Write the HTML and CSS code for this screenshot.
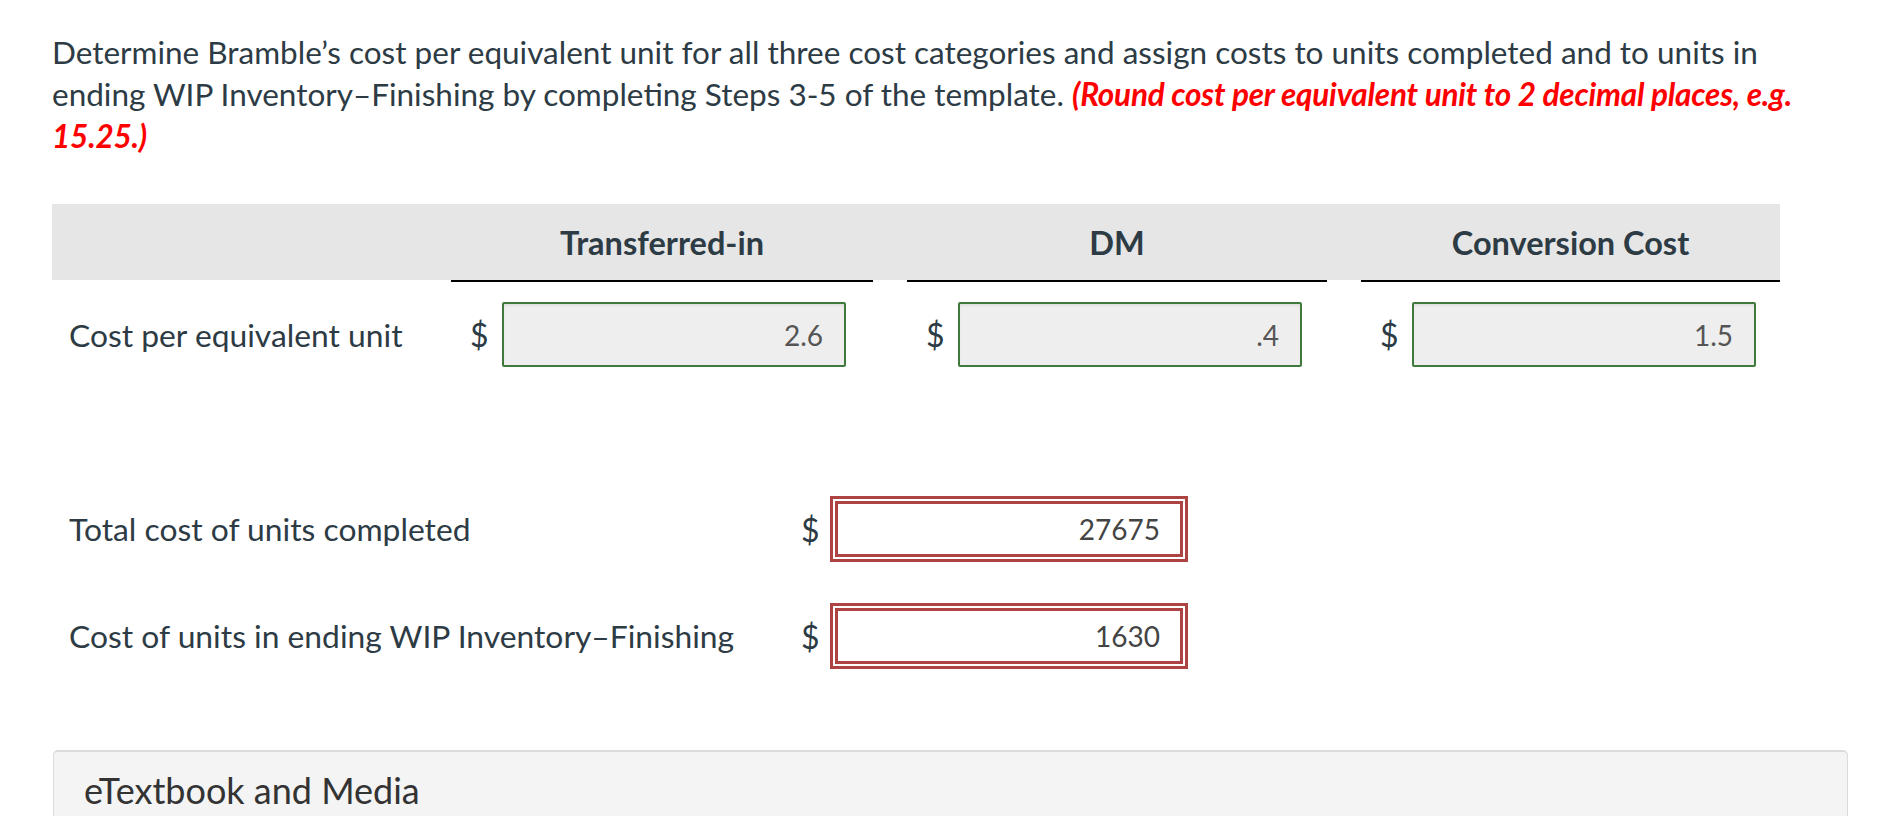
FILE: index.html
```html
<!DOCTYPE html>
<html>
<head>
<meta charset="utf-8">
<link rel="stylesheet" href="styles.css">
</head>
<body>
<div class="page">
  <p class="question">Determine Bramble’s cost per equivalent unit for all three cost categories and assign costs to units completed and to units in ending WIP Inventory–Finishing by completing Steps 3-5 of the template. <em class="note">(Round cost per equivalent unit to 2 decimal places, e.g. 15.25.)</em></p>

  <div class="cpe">
    <div class="cpe-head">
      <div class="hcell blank"></div>
      <div class="hcell col">Transferred-in</div>
      <div class="hcell col">DM</div>
      <div class="hcell col">Conversion Cost</div>
    </div>
    <div class="cpe-row">
      <div class="label">Cost per equivalent unit</div>
      <div class="vcell"><span class="dollar">$</span><div class="box ok">2.6</div></div>
      <div class="vcell"><span class="dollar">$</span><div class="box ok">.4</div></div>
      <div class="vcell"><span class="dollar">$</span><div class="box ok">1.5</div></div>
    </div>
  </div>

  <div class="assign">
    <div class="arow first">
      <div class="label wide">Total cost of units completed</div>
      <span class="dollar2">$</span>
      <div class="box bad">27675</div>
    </div>
    <div class="arow">
      <div class="label wide">Cost of units in ending WIP Inventory–Finishing</div>
      <span class="dollar2">$</span>
      <div class="box bad">1630</div>
    </div>
  </div>

  <div class="media">eTextbook and Media</div>
</div>
</body>
</html>
```

FILE: styles.css
```css
html, body {
  margin: 0;
  padding: 0;
  background: #ffffff;
}
body {
  font-family: Lato, "Open Sans", "Liberation Sans", sans-serif;
  color: #2d3b45;
}
.page {
  padding-left: 52px;
  width: 1796px;
}
.question {
  margin: 31px 0 0 0;
  width: 1760px;
  font-size: 31.5px;
  line-height: 42px;
  color: #2d3b45;
}
.note {
  color: #ff0000;
  font-weight: 700;
  font-style: italic;
  letter-spacing: -0.2px;
}
.cpe {
  margin-top: 47px;
  width: 1728px;
}
.cpe-head, .cpe-row {
  display: grid;
  grid-template-columns: 365px 422px 420px 419px;
  column-gap: 34px;
}
.cpe-head {
  background: linear-gradient(#e6e6e6, #e6e6e6) top left / 100% 76px no-repeat;
}
.hcell {
  height: 76px;
  display: flex;
  align-items: center;
  justify-content: center;
  font-size: 32.5px;
  font-weight: 700;
  color: #2d3b45;
}
.hcell.col {
  border-bottom: 2px solid #000;
}
.hcell.blank {
  border-bottom: 2px solid transparent;
}
.cpe-row {
  padding-top: 20px;
  align-items: center;
}
.label {
  font-size: 31.8px;
  padding-left: 17px;
  color: #2d3b45;
  white-space: nowrap;
}
.vcell {
  display: flex;
  align-items: center;
  padding-left: 19px;
}
.dollar {
  width: 32px;
  font-size: 32px;
}
.box {
  box-sizing: border-box;
  display: flex;
  align-items: center;
  justify-content: flex-end;
  font-size: 28px;
  color: #555555;
}
.box.ok {
  width: 344px;
  height: 65px;
  background: #eeeeee;
  border: 2px solid #3f7a3c;
  border-radius: 2px;
  padding-right: 21px;
  box-shadow: inset 0 2px 2px rgba(0,0,0,0.06);
}
.box.bad {
  width: 358px;
  height: 66px;
  background: #ffffff;
  border: 8px double #ad4342;
  padding-right: 20px;
  color: #444;
}
.assign {
  display: flex;
  flex-direction: column;
  gap: 41px;
}
.arow {
  display: flex;
  align-items: center;
}
.arow.first {
  margin-top: 129px;
}
.label.wide {
  width: 732px;
}
.dollar2 {
  width: 29px;
  font-size: 32px;
}
.media {
  margin-top: 81px;
  margin-left: 1px;
  width: 1795px;
  box-sizing: border-box;
  height: 100px;
  background: #f4f4f4;
  border: 1px solid #dcdcdc;
  border-top: 2px solid #dcdcdc;
  border-radius: 5px 5px 0 0;
  padding: 17px 0 0 30px;
  font-size: 36px;
  line-height: 42px;
  color: #333333;
}
```
